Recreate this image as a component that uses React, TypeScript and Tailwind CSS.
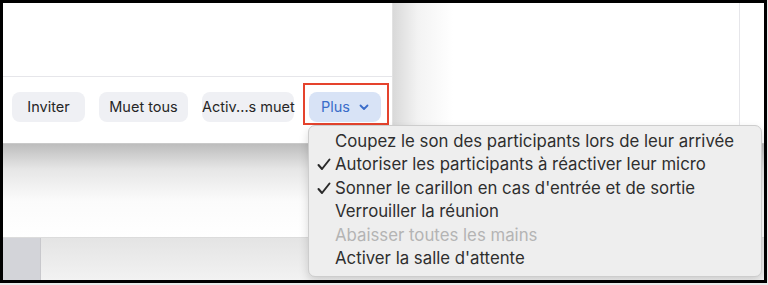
import React from "react";

const font = { fontFamily: 'Inter, "Liberation Sans", Arial, sans-serif' };

type Item = { label: string; checked?: boolean; disabled?: boolean };

const items: Item[] = [
  { label: "Coupez le son des participants lors de leur arrivée" },
  { label: "Autoriser les participants à réactiver leur micro", checked: true },
  { label: "Sonner le carillon en cas d'entrée et de sortie", checked: true },
  { label: "Verrouiller la réunion" },
  { label: "Abaisser toutes les mains", disabled: true },
  { label: "Activer la salle d'attente" },
];

function Check() {
  return (
    <svg width="14" height="13" viewBox="0 0 14 13" className="absolute left-[8px] top-[5px]">
      <path d="M1.5 7 L5 11 L12.5 1.5" fill="none" stroke="#2a2a2a" strokeWidth="2" strokeLinecap="round" strokeLinejoin="round" />
    </svg>
  );
}

function PanelButton({ label, className = "" }: { label: string; className?: string }) {
  return (
    <button className={`h-[30px] whitespace-nowrap rounded-[8px] bg-[#eff0f4] text-[14.5px] text-[#262626] ${className}`}>
      {label}
    </button>
  );
}

export default function App() {
  return (
    <div className="h-[285px] w-[768px] bg-[#e9e9e9]" style={font}>
      <div className="relative h-[283px] w-[767px] overflow-hidden border-[3px] border-black bg-white">
        {/* fenêtre des participants + fond */}
        <div className="flex h-[140px]">
          <div className="flex w-[390px] flex-col border-r border-[#e2e2e2] bg-white">
            <div className="h-[74px] border-b border-[#e6e6ea]" />
            <div className="flex items-center pt-[15px]">
              <PanelButton label="Inviter" className="ml-[9px] w-[73px]" />
              <PanelButton label="Muet tous" className="ml-[14px] w-[89px]" />
              <PanelButton label="Activ...s muet" className="ml-[14px] w-[92px] px-0" />
              <button className="ml-[15px] flex h-[30px] w-[72px] items-center justify-center gap-[9px] rounded-[8px] bg-[#d8e3f6] text-[14.5px] text-[#3a6cc9]">
                <span>Plus</span>
                <svg width="10" height="7" viewBox="0 0 10 7">
                  <path d="M1.5 1.5 L5 5 L8.5 1.5" fill="none" stroke="#3a6cc9" strokeWidth="1.8" strokeLinecap="round" strokeLinejoin="round" />
                </svg>
              </button>
            </div>
          </div>
          <div className="flex flex-1">
            <div className="flex-1 bg-[linear-gradient(to_right,#d9d9d9_0px,#f3f3f3_25px,#ffffff_60px)]" />
            <div className="w-[25px] border-l border-[#e6e6ea] bg-white" />
          </div>
        </div>
        <div className="h-[94px] border-t border-[#c9c9c9] bg-[linear-gradient(to_bottom,#bdbdbd_0px,#e6e6e6_25px,#fbfbfb_57px,#ffffff_94px)]" />
        <div className="flex h-[43px] border-t border-[#dcdcdc]">
          <div className="w-[37px] bg-[#d3d4d9]" />
          <div className="flex-1 border-l border-[#c8c8cc] bg-[linear-gradient(to_bottom,#e4e4e4,#f2f2f2)]" />
        </div>

        {/* cadre rouge autour de Plus */}
        <div className="absolute left-[300px] top-[80px] h-[42px] w-[86px] border-2 border-[#e5432d]" />

        {/* menu déroulant */}
        <div className="absolute left-[305px] top-[122px] h-[152px] w-[454px] rounded-[7px] border border-[#cdcdcd] bg-[#eeeeee] pt-[4px] shadow-[0_4px_10px_rgba(0,0,0,0.15)]">
          {items.map((it) => (
            <div
              key={it.label}
              className={`relative h-[23.4px] whitespace-nowrap pl-[26px] text-[16.8px] leading-[23.4px] ${it.disabled ? "text-[#b4b4b4]" : "text-[#2e2e2e]"}`}
            >
              {it.checked && <Check />}
              {it.label}
            </div>
          ))}
        </div>
      </div>
    </div>
  );
}
